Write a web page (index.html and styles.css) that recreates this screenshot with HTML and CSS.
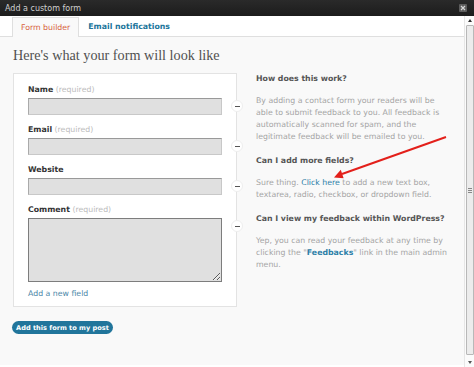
FILE: index.html
```
<!DOCTYPE html>
<html lang="en">
  <head>
    <meta charset="UTF-8" />
    <meta name="viewport" content="width=device-width, initial-scale=1.0" />
    <title>Add a custom form</title>
    <link rel="stylesheet" href="styles.css">
  </head>

  <body>
    <div class="dialog">
      <div class="titlebar">
        <span class="title">Add a custom form</span>
        <svg class="close" width="8" height="8" viewBox="0 0 8 8" aria-label="Close">
          <rect x="0" y="0" width="8" height="8" rx="1" fill="#5c5c5c" />
          <path d="M2 2 L6 6 M6 2 L2 6" stroke="#d8d8d8" stroke-width="1.2" />
        </svg>
      </div>

      <div class="frame">
        <div class="main">
          <div class="tabs">
            <a class="tab active">Form builder</a>
            <a class="tab">Email notifications</a>
          </div>

          <div class="content">
            <h2>Here's what your form will look like</h2>

            <div class="cols">
              <div class="form-col">
                <div class="form-box">
                  <div class="field">
                    <label><b>Name</b> <span class="req">(required)</span></label>
                    <input type="text" />
                    <span class="remove"></span>
                  </div>
                  <div class="field">
                    <label><b>Email</b> <span class="req">(required)</span></label>
                    <input type="text" />
                    <span class="remove"></span>
                  </div>
                  <div class="field">
                    <label><b>Website</b></label>
                    <input type="text" />
                    <span class="remove"></span>
                  </div>
                  <div class="field">
                    <label><b>Comment</b> <span class="req">(required)</span></label>
                    <textarea></textarea>
                    <span class="remove"></span>
                  </div>
                  <a class="add-field">Add a new field</a>
                </div>

                <button class="add-btn">Add this form to my post</button>
              </div>

              <div class="help">
                <h3>How does this work?</h3>
                <p>By adding a contact form your readers will be able to submit feedback to you. All feedback is automatically scanned for spam, and the legitimate feedback will be emailed to you.</p>
                <h3>Can I add more fields?</h3>
                <p>Sure thing. <a>Click here</a> to add a new text box, textarea, radio, checkbox, or dropdown field.</p>
                <h3>Can I view my feedback within WordPress?</h3>
                <p>Yep, you can read your feedback at any time by clicking the "<a><b>Feedbacks</b></a>" link in the main admin menu.</p>
              </div>
            </div>
          </div>
        </div>

        <div class="scrollbar">
          <span class="arrow up"></span>
          <div class="thumb"><span class="grip"></span></div>
          <span class="arrow down"></span>
        </div>
      </div>

      <svg class="annotation" width="474" height="367" viewBox="0 0 474 367">
        <line x1="446" y1="137" x2="342" y2="174" stroke="#e3201b" stroke-width="2" />
        <polygon points="334,177.5 343.6,178.2 340.8,169.8" fill="#e3201b" />
      </svg>
    </div>
  </body>
</html>
```

FILE: styles.css
```
* {
  box-sizing: border-box;
  margin: 0;
  padding: 0;
}

body {
  width: 474px;
  height: 367px;
  overflow: hidden;
  font-family: 'DejaVu Sans', Verdana, sans-serif;
  font-size: 7.8px;
  background: #fff;
}

.dialog {
  position: relative;
  height: 367px;
  display: flex;
  flex-direction: column;
}

.titlebar {
  height: 16px;
  background: linear-gradient(#2a2a2a, #1c1c1c);
  display: flex;
  align-items: center;
  justify-content: space-between;
  padding: 0 7px 0 5px;
}

.title {
  color: #cfcfcf;
  font-size: 8px;
}

.frame {
  flex: 1;
  display: flex;
}

.main {
  flex: 1;
  display: flex;
  flex-direction: column;
  padding-bottom: 2px;
}

.tabs {
  height: 21px;
  background: #fff;
  border-bottom: 1px solid #dfdfdf;
  display: flex;
  align-items: flex-end;
  padding-left: 12px;
}

.tab {
  height: 19px;
  display: flex;
  align-items: center;
  padding: 0 9px;
  color: #21759b;
  font-weight: bold;
}

.tab.active {
  background: #f9f9f9;
  border: 1px solid #dfdfdf;
  border-bottom: none;
  margin-bottom: -1px;
  height: 20px;
  padding: 0 8px;
  color: #d75f3c;
  font-weight: normal;
}

.content {
  flex: 1;
  background: #f9f9f9;
  padding: 9px 8px 0 13px;
}

.content h2 {
  font-family: 'Liberation Serif', Georgia, serif;
  font-weight: normal;
  font-size: 14.2px;
  line-height: 18px;
  color: #505050;
  margin-bottom: 9px;
}

.cols {
  display: flex;
  gap: 19px;
}

.form-col {
  width: 224px;
}

.form-box {
  background: #fff;
  border: 1px solid #e3e3e3;
  padding: 11px 14px 7px;
}

.field {
  position: relative;
  margin-bottom: 10px;
}

.field label {
  display: block;
  height: 10px;
  line-height: 10px;
  margin-bottom: 3px;
  color: #333;
}

.req {
  color: #bbb;
}

.field input,
.field textarea {
  display: block;
  width: 100%;
  height: 17px;
  background: #e0e0e0;
  border: 1px solid #c8c8c8;
  border-top-color: #999;
  border-left-color: #aaa;
}

.field textarea {
  height: 64px;
  border: 1px solid #7d7d7d;
  resize: both;
}

.field:nth-child(4) {
  margin-bottom: 7px;
}

.remove {
  position: absolute;
  top: 15px;
  right: -21px;
  width: 12px;
  height: 12px;
  border-radius: 50%;
  background: #fff;
  border: 1px solid #eee;
}

.remove::after {
  content: '';
  position: absolute;
  left: 3px;
  top: 4.5px;
  width: 5px;
  height: 1.5px;
  background: #555;
}

.add-field {
  display: block;
  line-height: 10px;
  color: #4b87a8;
}

.add-btn {
  margin-top: 14px;
  height: 13px;
  width: 101px;
  border: none;
  border-radius: 7px;
  background: #21759b;
  color: #fff;
  font-family: 'DejaVu Sans', Verdana, sans-serif;
  font-size: 6.6px;
  font-weight: bold;
  margin-left: -1px;
}

.help {
  width: 192px;
  line-height: 12px;
  color: #a4a4a4;
}

.help h3 {
  font-size: 7.8px;
  color: #555;
  white-space: nowrap;
  margin-bottom: 10px;
}

.help p {
  margin-bottom: 12px;
}

.help a {
  color: #2f80a8;
}

.scrollbar {
  width: 10px;
  background: #fbfbfb;
  border-left: 1px solid #e6e6e6;
  display: flex;
  flex-direction: column;
  align-items: center;
}

.arrow {
  width: 0;
  height: 0;
  border-left: 2.5px solid transparent;
  border-right: 2.5px solid transparent;
  margin: 3px 0;
}

.arrow.up {
  border-bottom: 3px solid #333;
}

.arrow.down {
  border-top: 3px solid #555;
  margin-top: 6px;
}

.thumb {
  flex: 1;
  width: 8px;
  background: #ececec;
  border: 1px solid #b8b8b8;
  border-radius: 1px;
  display: flex;
  align-items: center;
  justify-content: center;
}

.grip {
  width: 4px;
  height: 5px;
  background: repeating-linear-gradient(#888 0 1px, transparent 1px 2px);
}

.annotation {
  position: absolute;
  top: 0;
  left: 0;
  pointer-events: none;
}
```
